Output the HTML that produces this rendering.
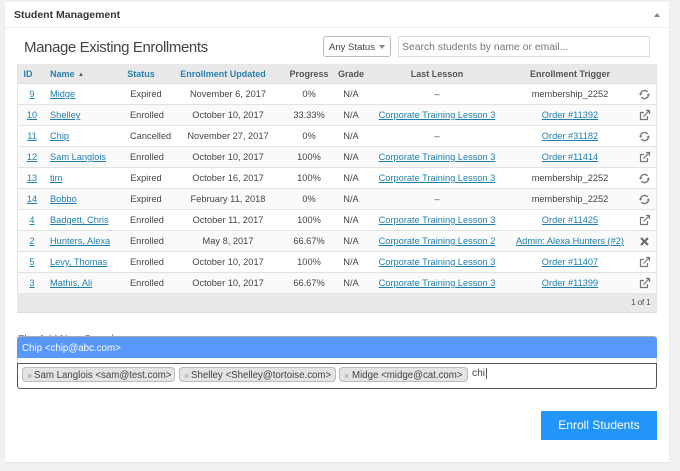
<!DOCTYPE html>
<html>
<head>
<meta charset="utf-8">
<style>
html{margin:0;padding:0;width:680px;height:471px;overflow:hidden;background:#f1f1f1;}
body{margin:0;padding:0;width:680px;height:471px;overflow:hidden;position:relative;font-family:"Liberation Sans",sans-serif;font-size:9.25px;color:#444;filter:blur(.3px);}
.a{position:absolute;white-space:nowrap;}
a{color:#1f7fae;text-decoration:underline;}
#panel{left:5px;top:2px;width:664px;height:460px;background:#fff;box-shadow:0 1px 1px rgba(0,0,0,.06);}
table{position:absolute;left:17px;top:64px;width:640px;border-collapse:collapse;table-layout:fixed;}
td,th{padding:0;text-align:center;height:20px;border-bottom:1px solid #e2e2e2;font-size:9.25px;white-space:nowrap;overflow:visible;}
th{background:#e9e9e9;font-weight:bold;color:#555;height:19px;border-bottom:1px solid #ddd;font-size:9px;}
th a{color:#2a81ad;text-decoration:none;}
tr.e td{background:#fafafa;}
td.l,th.l{text-align:left;padding-left:3px;}
td:nth-child(3){padding-right:2px;}
td:nth-child(4){padding-left:10px;}
td svg{display:block;margin:0 auto;}
.c{font-size:9.7px;line-height:12px;color:#444;top:370px;}
.x{font-size:9px;line-height:12px;color:#999;top:370px;}
.t{top:367px;height:13px;background:#e4e4e4;border:1px solid #bbb;border-radius:4px;}
</style>
</head>
<body>
<div class="a" id="panel"></div>
<div class="a" style="left:5px;top:27px;width:664px;height:1px;background:#eee;"></div>
<div class="a" style="left:14px;top:9px;font-size:10.5px;font-weight:bold;color:#32373c;line-height:12px;">Student Management</div>
<div class="a" style="left:654px;top:13px;width:0;height:0;border-left:3.5px solid transparent;border-right:3.5px solid transparent;border-bottom:4.5px solid #82878c;"></div>
<div class="a" style="left:24px;top:39px;font-size:15px;letter-spacing:-.39px;color:#444;line-height:18px;">Manage Existing Enrollments</div>
<div class="a" style="left:323px;top:36px;width:66px;height:19px;border:1px solid #bbb;border-radius:3px;background:#fff;"></div>
<div class="a" style="left:329px;top:42px;font-size:9.5px;color:#444;line-height:12px;">Any Status</div>
<div class="a" style="left:379px;top:45px;width:0;height:0;border-left:3px solid transparent;border-right:3px solid transparent;border-top:4px solid #888;"></div>
<div class="a" style="left:398px;top:36px;width:250px;height:19px;border:1px solid #ddd;background:#fff;"></div>
<div class="a" style="left:402px;top:42px;font-size:10.4px;color:#777;line-height:12px;">Search students by name or email...</div>

<table>
<colgroup><col style="width:30px"><col style="width:83px"><col style="width:34px"><col style="width:118px"><col style="width:54px"><col style="width:30px"><col style="width:142px"><col style="width:124px"><col style="width:25px"></colgroup>
<tr><th><a href="#" style="position:relative;left:-4px">ID</a></th><th class="l"><a href="#">Name</a> <span style="font-size:6px;color:#555;position:relative;top:-1px;left:1px">▲</span></th><th><a href="#" style="position:relative;left:-6px">Status</a></th><th><a href="#">Enrollment Updated</a></th><th>Progress</th><th>Grade</th><th>Last Lesson</th><th>Enrollment Trigger</th><th></th></tr>
<tr><td><a href="#">9</a></td><td class="l"><a href="#">Midge</a></td><td>Expired</td><td>November 6, 2017</td><td>0%</td><td>N/A</td><td>–</td><td>membership_2252</td><td><svg width="13" height="13" viewBox="0 0 13 13" fill="none" stroke="#777" stroke-width="1.4"><path d="M2.6 6.2a3.9 3.9 0 0 1 7-2.2M10.4 6.8a3.9 3.9 0 0 1-7 2.2"/><path d="M0.8 5.7h3.6L2.6 7.7zM12.2 7.3H8.6l1.8-2z" fill="#777" stroke="none"/></svg></td></tr>
<tr class="e"><td><a href="#">10</a></td><td class="l"><a href="#">Shelley</a></td><td>Enrolled</td><td>October 10, 2017</td><td>33.33%</td><td>N/A</td><td><a href="#">Corporate Training Lesson 3</a></td><td><a href="#">Order #11392</a></td><td><svg width="12" height="12" viewBox="0 0 12 12" fill="none" stroke="#777" stroke-width="1.2"><path d="M8.5 7v3.5h-7v-7H5"/><path d="M4.5 7.5L10.2 1.8M7 1.5h3.5V5"/></svg></td></tr>
<tr><td><a href="#">11</a></td><td class="l"><a href="#">Chip</a></td><td>Cancelled</td><td>November 27, 2017</td><td>0%</td><td>N/A</td><td>–</td><td><a href="#">Order #31182</a></td><td><svg width="13" height="13" viewBox="0 0 13 13" fill="none" stroke="#777" stroke-width="1.4"><path d="M2.6 6.2a3.9 3.9 0 0 1 7-2.2M10.4 6.8a3.9 3.9 0 0 1-7 2.2"/><path d="M0.8 5.7h3.6L2.6 7.7zM12.2 7.3H8.6l1.8-2z" fill="#777" stroke="none"/></svg></td></tr>
<tr class="e"><td><a href="#">12</a></td><td class="l"><a href="#">Sam Langlois</a></td><td>Enrolled</td><td>October 10, 2017</td><td>100%</td><td>N/A</td><td><a href="#">Corporate Training Lesson 3</a></td><td><a href="#">Order #11414</a></td><td><svg width="12" height="12" viewBox="0 0 12 12" fill="none" stroke="#777" stroke-width="1.2"><path d="M8.5 7v3.5h-7v-7H5"/><path d="M4.5 7.5L10.2 1.8M7 1.5h3.5V5"/></svg></td></tr>
<tr><td><a href="#">13</a></td><td class="l"><a href="#">tim</a></td><td>Expired</td><td>October 16, 2017</td><td>100%</td><td>N/A</td><td><a href="#">Corporate Training Lesson 3</a></td><td>membership_2252</td><td><svg width="13" height="13" viewBox="0 0 13 13" fill="none" stroke="#777" stroke-width="1.4"><path d="M2.6 6.2a3.9 3.9 0 0 1 7-2.2M10.4 6.8a3.9 3.9 0 0 1-7 2.2"/><path d="M0.8 5.7h3.6L2.6 7.7zM12.2 7.3H8.6l1.8-2z" fill="#777" stroke="none"/></svg></td></tr>
<tr class="e"><td><a href="#">14</a></td><td class="l"><a href="#">Bobbo</a></td><td>Expired</td><td>February 11, 2018</td><td>0%</td><td>N/A</td><td>–</td><td>membership_2252</td><td><svg width="13" height="13" viewBox="0 0 13 13" fill="none" stroke="#777" stroke-width="1.4"><path d="M2.6 6.2a3.9 3.9 0 0 1 7-2.2M10.4 6.8a3.9 3.9 0 0 1-7 2.2"/><path d="M0.8 5.7h3.6L2.6 7.7zM12.2 7.3H8.6l1.8-2z" fill="#777" stroke="none"/></svg></td></tr>
<tr><td><a href="#">4</a></td><td class="l"><a href="#">Badgett, Chris</a></td><td>Enrolled</td><td>October 11, 2017</td><td>100%</td><td>N/A</td><td><a href="#">Corporate Training Lesson 3</a></td><td><a href="#">Order #11425</a></td><td><svg width="12" height="12" viewBox="0 0 12 12" fill="none" stroke="#777" stroke-width="1.2"><path d="M8.5 7v3.5h-7v-7H5"/><path d="M4.5 7.5L10.2 1.8M7 1.5h3.5V5"/></svg></td></tr>
<tr class="e"><td><a href="#">2</a></td><td class="l"><a href="#">Hunters, Alexa</a></td><td>Enrolled</td><td>May 8, 2017</td><td>66.67%</td><td>N/A</td><td><a href="#">Corporate Training Lesson 2</a></td><td><a href="#">Admin: Alexa Hunters (#2)</a></td><td><svg width="13" height="13" viewBox="0 0 13 13" fill="none" stroke="#666" stroke-width="2"><path d="M3 3l7 7M10 3l-7 7"/></svg></td></tr>
<tr><td><a href="#">5</a></td><td class="l"><a href="#">Levy, Thomas</a></td><td>Enrolled</td><td>October 10, 2017</td><td>100%</td><td>N/A</td><td><a href="#">Corporate Training Lesson 3</a></td><td><a href="#">Order #11407</a></td><td><svg width="12" height="12" viewBox="0 0 12 12" fill="none" stroke="#777" stroke-width="1.2"><path d="M8.5 7v3.5h-7v-7H5"/><path d="M4.5 7.5L10.2 1.8M7 1.5h3.5V5"/></svg></td></tr>
<tr class="e"><td><a href="#">3</a></td><td class="l"><a href="#">Mathis, Ali</a></td><td>Enrolled</td><td>October 10, 2017</td><td>66.67%</td><td>N/A</td><td><a href="#">Corporate Training Lesson 3</a></td><td><a href="#">Order #11399</a></td><td><svg width="12" height="12" viewBox="0 0 12 12" fill="none" stroke="#777" stroke-width="1.2"><path d="M8.5 7v3.5h-7v-7H5"/><path d="M4.5 7.5L10.2 1.8M7 1.5h3.5V5"/></svg></td></tr>
</table>
<div class="a" style="left:17px;top:64px;width:1px;height:249px;background:#e4e4e4;"></div>
<div class="a" style="left:656px;top:64px;width:1px;height:249px;background:#e4e4e4;"></div>
<div class="a" style="left:17px;top:293px;width:640px;height:19px;background:#e9e9e9;border-bottom:1px solid #ddd;"></div>
<div class="a" style="left:631px;top:297px;font-size:8.5px;letter-spacing:-.3px;color:#555;line-height:11px;">1 of 1</div>

<div class="a" style="left:18px;top:333px;font-size:10.5px;color:#777;line-height:12px;">The Add New Search</div>
<div class="a" style="left:17px;top:337px;width:640px;height:21px;background:#5897fb;border-radius:3px 3px 0 0;box-shadow:0 -1px 0 #aaa;"></div>
<div class="a" style="left:22px;top:343px;font-size:9.75px;color:#fff;line-height:12px;">Chip &lt;chip@abc.com&gt;</div>
<div class="a" style="left:17px;top:358px;width:1px;height:5px;background:#ddd;"></div>
<div class="a" style="left:656px;top:358px;width:1px;height:5px;background:#ddd;"></div>
<div class="a" style="left:17px;top:363px;width:638px;height:24px;border:1px solid #555;border-radius:0 0 3px 3px;background:#fff;"></div>
<div class="a t" style="left:22px;width:151px;"></div>
<div class="a x" style="left:27px;">×</div>
<div class="a c" style="left:34px;">Sam Langlois &lt;sam@test.com&gt;</div>
<div class="a t" style="left:179px;width:155px;"></div>
<div class="a x" style="left:184px;">×</div>
<div class="a c" style="left:191px;">Shelley &lt;Shelley@tortoise.com&gt;</div>
<div class="a t" style="left:339px;width:127px;"></div>
<div class="a x" style="left:344px;">×</div>
<div class="a c" style="left:352px;">Midge &lt;midge@cat.com&gt;</div>
<div class="a" style="left:472px;top:368px;font-size:10.2px;line-height:12px;color:#444;">chi</div>
<div class="a" style="left:486px;top:368px;width:1px;height:11px;background:#555;"></div>

<div class="a" style="left:541px;top:411px;width:116px;height:29px;background:#2196f8;color:#fff;font-size:12px;line-height:29px;text-align:center;">Enroll Students</div>
</body>
</html>
